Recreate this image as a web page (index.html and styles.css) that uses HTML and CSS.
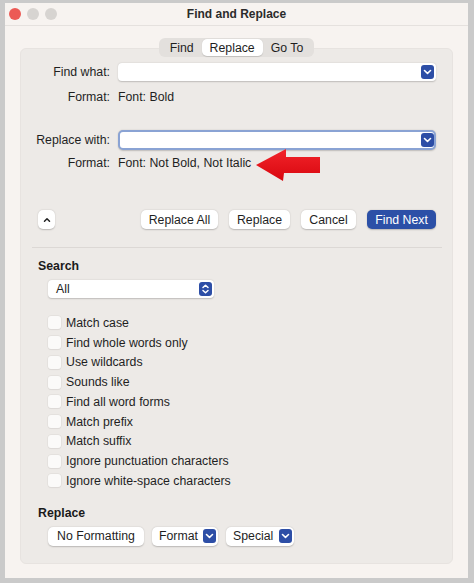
FILE: index.html
```html
<!DOCTYPE html>
<html lang="en">
<head>
  <meta charset="UTF-8" />
  <meta name="viewport" content="width=device-width, initial-scale=1.0"/>
  <title>Find and Replace</title>
  <link rel="stylesheet" href="styles.css">
</head>
<body>
  <div class="window">
    <div class="titlebar">
      <div class="lights">
        <span class="light close"></span>
        <span class="light"></span>
        <span class="light"></span>
      </div>
      <div class="title">Find and Replace</div>
      <div></div>
    </div>

    <div class="tabs">
      <span class="tab">Find</span>
      <span class="tab active">Replace</span>
      <span class="tab">Go To</span>
    </div>

    <div class="panel">
      <div class="row r-find">
        <label class="label">Find what:</label>
        <div class="combo">
          <span class="chev">
            <svg width="9" height="6" viewBox="0 0 9 6"><path d="M1.5 1.5 L4.5 4.3 L7.5 1.5" fill="none" stroke="#fff" stroke-width="1.6" stroke-linecap="round" stroke-linejoin="round"/></svg>
          </span>
        </div>
      </div>
      <div class="row r-fmt">
        <span class="label">Format:</span>
        <span class="value">Font: Bold</span>
      </div>

      <div class="row r-replace">
        <label class="label">Replace with:</label>
        <div class="combo focused">
          <span class="chev">
            <svg width="9" height="6" viewBox="0 0 9 6"><path d="M1.5 1.5 L4.5 4.3 L7.5 1.5" fill="none" stroke="#fff" stroke-width="1.6" stroke-linecap="round" stroke-linejoin="round"/></svg>
          </span>
        </div>
      </div>
      <div class="row r-fmt2">
        <span class="label">Format:</span>
        <span class="value">Font: Not Bold, Not Italic
          <!-- annotation arrow -->
          <svg class="arrow" width="66" height="34" viewBox="0 0 66 34">
            <defs>
              <linearGradient id="ag" x1="0" y1="0" x2="0" y2="1">
                <stop offset="0" stop-color="#f2242a"/>
                <stop offset="1" stop-color="#d8070f"/>
              </linearGradient>
            </defs>
            <polygon points="1,17 31,1 31,9 65,9 65,25 29,25 28,33" fill="url(#ag)"/>
          </svg>
        </span>
      </div>

      <div class="actions">
        <button class="btn small">
          <svg width="8" height="6" viewBox="0 0 8 6"><path d="M1.5 4.3 L4 1.8 L6.5 4.3" fill="none" stroke="#222" stroke-width="1.5" stroke-linecap="round" stroke-linejoin="round"/></svg>
        </button>
        <div class="spacer"></div>
        <button class="btn w-all">Replace All</button>
        <button class="btn w-rep">Replace</button>
        <button class="btn w-can">Cancel</button>
        <button class="btn primary w-next">Find Next</button>
      </div>

      <hr class="sep">

      <h3 class="heading">Search</h3>
      <div class="select">
        <span>All</span>
        <span class="updown">
          <svg width="9" height="12" viewBox="0 0 9 12"><path d="M2 4.5 L4.5 2.2 L7 4.5 M2 7.5 L4.5 9.8 L7 7.5" fill="none" stroke="#fff" stroke-width="1.5" stroke-linecap="round" stroke-linejoin="round"/></svg>
        </span>
      </div>

      <ul class="checks">
        <li><span class="box"></span>Match case</li>
        <li><span class="box"></span>Find whole words only</li>
        <li><span class="box"></span>Use wildcards</li>
        <li><span class="box"></span>Sounds like</li>
        <li><span class="box"></span>Find all word forms</li>
        <li><span class="box"></span>Match prefix</li>
        <li><span class="box"></span>Match suffix</li>
        <li><span class="box"></span>Ignore punctuation characters</li>
        <li><span class="box"></span>Ignore white-space characters</li>
      </ul>

      <h3 class="heading replace-head">Replace</h3>
      <div class="bottom">
        <button class="btn w-nofmt">No Formatting</button>
        <button class="btn menu w-fmt">Format
          <span class="chev">
            <svg width="9" height="6" viewBox="0 0 9 6"><path d="M1.5 1.5 L4.5 4.3 L7.5 1.5" fill="none" stroke="#fff" stroke-width="1.6" stroke-linecap="round" stroke-linejoin="round"/></svg>
          </span>
        </button>
        <button class="btn menu w-spec">Special
          <span class="chev">
            <svg width="9" height="6" viewBox="0 0 9 6"><path d="M1.5 1.5 L4.5 4.3 L7.5 1.5" fill="none" stroke="#fff" stroke-width="1.6" stroke-linecap="round" stroke-linejoin="round"/></svg>
          </span>
        </button>
      </div>
    </div>
  </div>
</body>
</html>
```

FILE: styles.css
```css
body {
  margin: 0;
  padding-top: 3px;
  background: #cacaca;
  font-family: "Liberation Sans", Arial, sans-serif;
  font-size: 12.3px;
  color: #1f1f1f;
}
.window {
  margin: 0 6px 0 5px;
  height: 575px;
  background: #f7f3f0;
  display: flex;
  flex-direction: column;
}

/* タイトルバー */
.titlebar {
  height: 22px;
  border-bottom: 1px solid #e5e1de;
  display: grid;
  grid-template-columns: 1fr auto 1fr;
  align-items: center;
}
.lights {
  display: flex;
  gap: 6px;
  padding-left: 4px;
}
.light {
  width: 12px;
  height: 12px;
  border-radius: 50%;
  background: #d7d4d1;
}
.light.close {
  background: #ec5a55;
}
.title {
  font-weight: bold;
  font-size: 12px;
  color: #2b2b2b;
}

/* タブ */
.tabs {
  align-self: center;
  margin-top: 12px;
  position: relative;
  z-index: 1;
  display: flex;
  height: 19px;
  padding: 1px 3px;
  box-sizing: border-box;
  background: #e3e0dd;
  border-radius: 6px;
}
.tab {
  display: flex;
  align-items: center;
  padding: 0 8px;
  color: #1f1f1f;
}
.tab.active {
  background: #fff;
  border-radius: 5px;
  box-shadow: 0 0.5px 1px rgba(0,0,0,0.15);
}

/* パネル */
.panel {
  margin: -9px 15px 0;
  height: 516px;
  box-sizing: border-box;
  background: #edeae7;
  border: 1px solid #e7e3e0;
  border-radius: 6px;
  padding-top: 14px;
}
.row {
  display: flex;
  align-items: center;
  gap: 8px;
  padding: 0 16px 0 6px;
}
.label {
  width: 83px;
  flex: none;
  text-align: right;
}
.r-find { height: 18px; }
.r-fmt { height: 16px; margin-top: 8px; }
.r-replace { height: 20px; margin-top: 25px; }
.r-fmt2 { height: 16px; margin-top: 5px; }
.value {
  position: relative;
}
.combo {
  flex: 1;
  height: 18px;
  background: #fff;
  border-radius: 4px;
  box-shadow: 0 0.5px 1.5px rgba(0,0,0,0.2);
  display: flex;
  justify-content: flex-end;
  align-items: center;
  padding-right: 2px;
}
.combo.focused {
  height: 16px;
  border: 2px solid #8aa3d4;
  border-radius: 5px;
  padding-right: 0;
}
.chev {
  width: 13px;
  height: 14px;
  background: #2d4ea6;
  border-radius: 3px;
  display: flex;
  align-items: center;
  justify-content: center;
}
.arrow {
  position: absolute;
  left: 137px;
  top: -8px;
}

/* ボタン */
.actions {
  display: flex;
  align-items: center;
  margin-top: 39px;
  padding: 0 16px 0 17px;
  gap: 11px;
}
.spacer {
  flex: 1;
}
.btn {
  height: 19px;
  background: #fff;
  border: none;
  border-radius: 5px;
  box-shadow: 0 0.5px 1.5px rgba(0,0,0,0.22);
  font-family: inherit;
  font-size: 12.3px;
  color: #1f1f1f;
  padding: 0;
  display: flex;
  align-items: center;
  justify-content: center;
}
.btn.small {
  width: 17px;
}
.btn.primary {
  background: #2c50a7;
  color: #fff;
}
.w-all { width: 77px; }
.w-rep { width: 61px; }
.w-can { width: 55px; }
.w-next { width: 69px; }

.sep {
  margin: 18px 10px 0 11px;
  border: none;
  border-top: 1px solid #dcd8d5;
}

.heading {
  margin: 11px 0 0 17px;
  font-size: 12.3px;
  font-weight: bold;
  color: #1a1a1a;
  line-height: 15px;
}
.select {
  margin: 6px 0 0 27px;
  width: 166px;
  height: 18px;
  box-sizing: border-box;
  background: #fff;
  border-radius: 4px;
  box-shadow: 0 0.5px 1.5px rgba(0,0,0,0.2);
  display: flex;
  align-items: center;
  justify-content: space-between;
  padding: 0 2px 0 8px;
}
.updown {
  width: 13px;
  height: 14px;
  background: #2d4ea6;
  border-radius: 3px;
  display: flex;
  align-items: center;
  justify-content: center;
}

/* チェックボックス */
.checks {
  list-style: none;
  margin: 15px 0 0 27px;
  padding: 0;
}
.checks li {
  height: 19.75px;
  display: flex;
  align-items: center;
  gap: 5px;
}
.box {
  width: 13px;
  height: 13px;
  background: #fbfaf9;
  border-radius: 3px;
  box-shadow: 0 0 0 0.5px #dedad7, 0 0.5px 1px rgba(0,0,0,0.08);
}

.replace-head {
  margin-top: 15px;
}
.bottom {
  display: flex;
  gap: 8px;
  margin: 6px 0 0 27px;
}
.btn.menu {
  justify-content: space-between;
  padding: 0 2px 0 7px;
}
.w-nofmt { width: 96px; }
.w-fmt { width: 66px; box-sizing: border-box; }
.w-spec { width: 68px; box-sizing: border-box; }
```
